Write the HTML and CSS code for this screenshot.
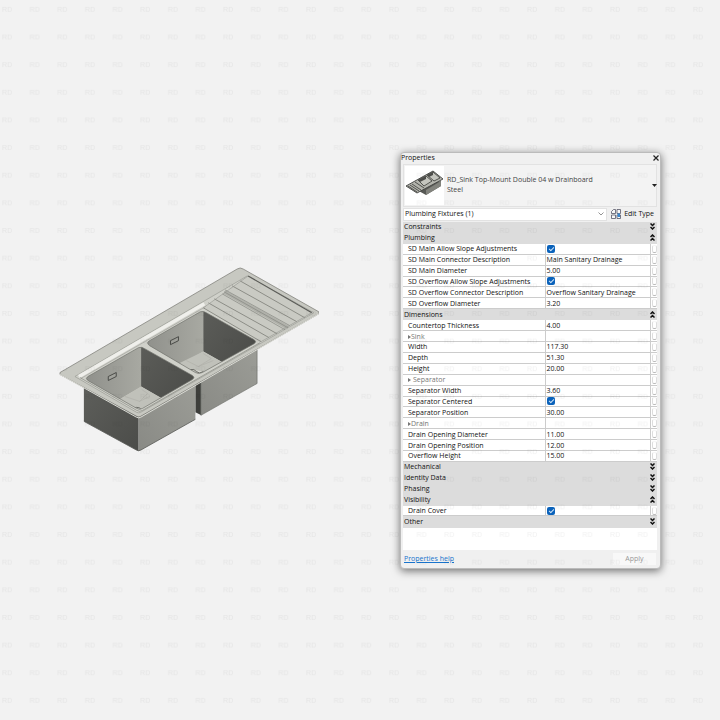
FILE: index.html
```
<!DOCTYPE html>
<html lang="en">
<head>
<meta charset="utf-8">
<meta name="viewport" content="width=device-width, initial-scale=1">
<title>Properties</title>
<link rel="stylesheet" href="styles.css">
</head>
<body>
<svg class="defs" aria-hidden="true">
  <symbol id="more" viewBox="0 0 5 7"><path d="M.5.5L2.500 2.500 4.500.5M.5 4L2.500 6 4.500 4" fill="none" stroke="#111" stroke-width="1.500"/></symbol>
  <symbol id="less" viewBox="0 0 5 7"><path d="M.5 3L2.500 1 4.500 3M.5 6.500L2.500 4.500 4.500 6.500" fill="none" stroke="#111" stroke-width="1.500"/></symbol>
</svg>
<main class="stage">
  <svg class="sink" viewBox="58 267 262 186" role="img" aria-label="Double sink with drainboard">
    <defs>
      <linearGradient id="front" x1="0" y1="1" x2="1" y2="0"><stop stop-color="#898a85"/><stop offset="1" stop-color="#9c9d97"/></linearGradient>
      <linearGradient id="side" x1="0" y1="0" x2="1" y2="1"><stop stop-color="#5e5f5b"/><stop offset="1" stop-color="#4b4c49"/></linearGradient>
      <linearGradient id="wall" x1="0" y1="0" x2="1" y2="0"><stop stop-color="#8d8e89"/><stop offset="1" stop-color="#a8a9a2"/></linearGradient>
      <linearGradient id="dark" x1="0" y1="0" x2="1" y2="1"><stop stop-color="#5c5d59"/><stop offset="1" stop-color="#464744"/></linearGradient>
      <clipPath id="bowl1"><path d="M87 377L138 348Q141 347 144 349L192 376Q195 378 192 380L142 409Q139 411 136 409L87 381Q84 379 87 377Z"/></clipPath>
      <clipPath id="bowl2"><path d="M149 341L200 312Q203 311 206 313L254 340Q257 342 254 344L202 373Q198 375 195 373L149 346Q145 343 149 341Z"/></clipPath>
    </defs>
    <path d="M195 380L201 377V416L195 413Z" fill="#3d3e3b"/>
    <path d="M200.500 380L257 345V384L200.500 416Z" fill="url(#front)" stroke="#666762" stroke-width=".6"/>
    <path d="M83 385L138 415V452L83 422Z" fill="url(#side)"/>
    <path d="M138 415L195 380V420L138 452Z" fill="url(#front)"/>
    <path d="M83 422L136 451Q138 452 140 451L195 420" fill="none" stroke="#565753" stroke-width=".8"/>
    <path d="M59 373L237 269Q240 267 243 269L319 312V314L140 417Q138 418 136 417L59 375Z" fill="#c7c8c1" stroke="#777872" stroke-width=".7"/>
    <path d="M59 375L136 418Q138 419 140 418L319 314" fill="none" stroke="#dcddd7" stroke-width="1"/>
    <path d="M74 377L247 276L314 313L140 413Q138 414 136 413Z" fill="#d0d1ca" stroke="#92938c" stroke-width=".6"/>
    <path d="M78 377L204 304" fill="none" stroke="#efefeb" stroke-width="3.500"/>
    <path d="M80 379L205 307L260 340" fill="none" stroke="#999a94" stroke-width=".6"/>
    <path d="M79 378L136 411Q139 413 142 411L260 343" fill="none" stroke="#868780" stroke-width=".7"/>
    <g clip-path="url(#bowl1)">
      <path d="M80 345H141V387L105 408H80Z" fill="url(#wall)"/>
      <path d="M140.500 345L200 376V421L140.500 387Z" fill="url(#dark)"/>
      <path d="M140.500 387L170 404L139 421L112 404Z" fill="#c0c1ba"/>
      <path d="M141 390L147 394L139 402M149 397L139 402L124 397" fill="none" stroke="#aaaba4" stroke-width=".5"/>
      <ellipse cx="136" cy="410" rx="4" ry="2" fill="#d6d7d0" stroke="#555651" stroke-width=".8"/>
    </g>
    <path d="M87 377L138 348Q141 347 144 349L192 376Q195 378 192 380L142 409Q139 411 136 409L87 381Q84 379 87 377Z" fill="none" stroke="#6f706a" stroke-width=".7"/>
    <g clip-path="url(#bowl2)">
      <path d="M140 308H203V352L165 374H140Z" fill="url(#wall)"/>
      <path d="M203 310L262 342V385L203 352Z" fill="url(#dark)"/>
      <path d="M203 352L235 370L200 387L172 367Z" fill="#c0c1ba"/>
      <path d="M203 354L211 359L198 367M213 361L198 367L186 361" fill="none" stroke="#aaaba4" stroke-width=".5"/>
      <path d="M190 370Q194 369 196 372Q199 375 203 372" fill="#d6d7d0" stroke="#555651" stroke-width=".8"/>
    </g>
    <path d="M149 341L200 312Q203 311 206 313L254 340Q257 342 254 344L202 373Q198 375 195 373L149 346Q145 343 149 341Z" fill="none" stroke="#6f706a" stroke-width=".7"/>
    <path d="M107.500 377L115.500 373V377L107.500 381ZM170 341L178 337V341L170 345Z" fill="#a1a29c" stroke="#41423f" stroke-width=".9" stroke-linejoin="round"/>
    <path d="M204 308L248 276L313 313L260 343Z" fill="#c9cac3"/>
    <path d="M240 281L305 318M232 286L297 322M214 299L277 334M208 303L269 338M203 308L261 342" fill="none" stroke="#858680" stroke-width=".9"/>
    <path d="M224 292L288 328" fill="none" stroke="#b0b1aa" stroke-width="4"/>
    <path d="M225 290L290 326M222 294L285 330M224 292L288 328" fill="none" stroke="#858680" stroke-width=".7"/>
    <path d="M203 308L248 276" fill="none" stroke="#999a94" stroke-width=".7"/>
    <path d="M248 276L312 313" fill="none" stroke="#5a5b57" stroke-width="1.200"/>
    <path d="M312 313L261 342" fill="none" stroke="#999a94" stroke-width=".7"/>
  </svg>

  <section class="panel" aria-labelledby="title">
    <header class="titlebar">
      <h1 id="title">Properties</h1>
      <button class="close" aria-label="Close"><svg viewBox="0 0 6 6"><path d="M.5.5l5 5m0-5l-5 5" stroke="#222" stroke-width="1.200"/></svg></button>
    </header>
    <div class="type">
      <div class="thumb">
        <svg viewBox="0 0 39 39" aria-hidden="true">
          <path d="M12 20V24L21 29L36 20V15Z" fill="#585955"/>
          <path d="M21 24V29L36 20V15Z" fill="#82837d"/>
          <path d="M1 20L28 5L38 13L12 27Z" fill="#b3b4ad" stroke="#41423f" stroke-width=".9"/>
          <path d="M13 14L21 10L27 15L19 20Z" fill="#c4c5be" stroke="#373835" stroke-width=".8"/>
          <path d="M22 9L28 6L35 12L29 15Z" fill="#c4c5be" stroke="#373835" stroke-width=".8"/>
          <path d="M13 14L21 10V13L15 16ZM22 9L28 6V9L24 11Z" fill="#4c4d4a"/>
          <path d="M3 20L12 26M5 19L14 25M7 18L16 24M10 16L19 22" stroke="#454643" stroke-width=".9"/>
        </svg>
      </div>
      <p class="type-name">RD_Sink Top-Mount Double 04 w Drainboard<br>Steel</p>
      <button class="type-open" aria-label="Choose type"><svg viewBox="0 0 5 3"><path d="M0 0h5L2.500 3z" fill="#222"/></svg></button>
    </div>
    <div class="filter">
      <div class="select-wrap">
        <select aria-label="Category"><option>Plumbing Fixtures (1)</option></select>
        <svg viewBox="0 0 6 4" aria-hidden="true"><path d="M.5.5L3 3 5.500.5" fill="none" stroke="#777" stroke-width=".8"/></svg>
      </div>
      <button class="edit">
        <svg viewBox="0 0 11 11" aria-hidden="true"><path d="M.5 4.500V2.500L2.500.5H4.500V4.500ZM6 .5H9.500V4.500H6ZM.5 6H4.500V9.500H.5ZM6 6H9.500V9.500H6Z" fill="#f8f8f8" stroke="#556" stroke-width=".8"/><path d="M6.500 4.500H9V8H6.500Z" fill="#3c86cc"/></svg>
        <span>Edit Type</span>
      </button>
    </div>
    <div class="list">
      <table>
        <colgroup><col class="c-name"><col><col class="c-tool"></colgroup>
        <tbody>
          <tr class="group"><th colspan="2">Constraints</th><td><svg><use href="#more"/></svg></td></tr>
          <tr class="group"><th colspan="2">Plumbing</th><td><svg><use href="#less"/></svg></td></tr>
          <tr><th><label for="a">SD Main Allow Slope Adjustments</label></th><td><input id="a" type="checkbox" checked></td><td><i></i></td></tr>
          <tr><th>SD Main Connector Description</th><td>Main Sanitary Drainage</td><td><i></i></td></tr>
          <tr><th>SD Main Diameter</th><td>5.00</td><td><i></i></td></tr>
          <tr><th><label for="b">SD Overflow Allow Slope Adjustments</label></th><td><input id="b" type="checkbox" checked></td><td><i></i></td></tr>
          <tr><th>SD Overflow Connector Description</th><td>Overflow Sanitary Drainage</td><td><i></i></td></tr>
          <tr><th>SD Overflow Diameter</th><td>3.20</td><td><i></i></td></tr>
          <tr class="group"><th colspan="2">Dimensions</th><td><svg><use href="#less"/></svg></td></tr>
          <tr><th>Countertop Thickness</th><td>4.00</td><td><i></i></td></tr>
          <tr class="sub"><th><b></b>Sink</th><td></td><td><i></i></td></tr>
          <tr><th>Width</th><td>117.30</td><td><i></i></td></tr>
          <tr><th>Depth</th><td>51.30</td><td><i></i></td></tr>
          <tr><th>Height</th><td>20.00</td><td><i></i></td></tr>
          <tr class="sub spaced"><th><b></b>Separator</th><td></td><td><i></i></td></tr>
          <tr><th>Separator Width</th><td>3.60</td><td><i></i></td></tr>
          <tr><th><label for="c">Separator Centered</label></th><td><input id="c" type="checkbox" checked></td><td><i></i></td></tr>
          <tr><th>Separator Position</th><td>30.00</td><td><i></i></td></tr>
          <tr class="sub"><th><b></b>Drain</th><td></td><td><i></i></td></tr>
          <tr><th>Drain Opening Diameter</th><td>11.00</td><td><i></i></td></tr>
          <tr><th>Drain Opening Position</th><td>12.00</td><td><i></i></td></tr>
          <tr><th>Overflow Height</th><td>15.00</td><td><i></i></td></tr>
          <tr class="group"><th colspan="2">Mechanical</th><td><svg><use href="#more"/></svg></td></tr>
          <tr class="group"><th colspan="2">Identity Data</th><td><svg><use href="#more"/></svg></td></tr>
          <tr class="group"><th colspan="2">Phasing</th><td><svg><use href="#more"/></svg></td></tr>
          <tr class="group"><th colspan="2">Visibility</th><td><svg><use href="#less"/></svg></td></tr>
          <tr><th><label for="d">Drain Cover</label></th><td><input id="d" type="checkbox" checked></td><td><i></i></td></tr>
          <tr class="group"><th colspan="2">Other</th><td><svg><use href="#more"/></svg></td></tr>
        </tbody>
      </table>
    </div>
    <footer class="foot">
      <a href="#help">Properties help</a>
      <button class="apply" disabled>Apply</button>
    </footer>
  </section>
</main>
<svg class="watermark" viewBox="0 0 720 720" preserveAspectRatio="xMinYMin slice" aria-hidden="true">
  <defs><pattern id="rd" width="27.640" height="27.640" patternUnits="userSpaceOnUse"><text x="2" y="12">RD</text></pattern></defs>
  <rect width="720" height="720" fill="url(#rd)"/>
</svg>
</body>
</html>
```
FILE: styles.css
```
* { box-sizing: border-box; }
body {
  margin: 0;
  background: #f2f2f2;
  color: #111;
  font: 7px/10px "Open Sans", "Noto Sans", sans-serif;
}
button, select, input { font: inherit; color: inherit; margin: 0; }
button { border: 0; background: none; padding: 0; }
svg { display: block; }
.defs { position: absolute; width: 0; height: 0; }

.stage {
  display: grid;
  grid-template-columns: 378fr 22fr 261fr 59fr;
  align-items: center;
  min-height: 100vh;
}
.sink { width: 69%; justify-self: center; }

.panel {
  grid-column: 3;
  padding: 0 3px 0 2px;
  background: #f0f0f0;
  border: 1px solid #bbb;
  border-radius: 4px;
  box-shadow: 0 2px 9px rgba(0, 0, 0, .55);
}
.titlebar {
  display: flex;
  justify-content: space-between;
  align-items: center;
  height: 11px;
}
.titlebar h1 { margin: 0 0 0 -2px; font-size: 7px; font-weight: 400; }
.close { margin-right: -2px; }
.close svg { width: 6px; height: 6px; }

.type {
  display: flex;
  align-items: center;
  gap: 3px;
  height: 43px;
  padding: 0 0 0 1px;
  border: 1px solid #e2e2e2;
  background: #f3f3f3;
}
.thumb { width: 39px; height: 39px; background: #fff; }
.type-name { flex: 1; margin: 0; color: #444; white-space: nowrap; }
.type-open { margin-right: -1px; }
.type-open svg { width: 5px; height: 3px; }

.filter {
  display: flex;
  align-items: center;
  gap: 4px;
  height: 15px;
}
.select-wrap {
  display: grid;
  flex: 1;
  align-items: center;
  background: #fff;
  border: 1px solid #e2e2e2;
}
.select-wrap > * { grid-area: 1 / 1; }
.select-wrap select {
  appearance: none;
  width: 100%;
  height: 11px;
  padding: 0 1px;
  border: 0;
  background: transparent;
}
.select-wrap svg { justify-self: end; width: 6px; height: 4px; margin-right: 2px; pointer-events: none; }
.edit { display: flex; align-items: center; gap: 2px; padding-right: 3px; white-space: nowrap; }
.edit svg { width: 11px; height: 11px; }

.list { background: #fff; padding-bottom: 22px; }
table {
  width: 100%;
  height: 306px;
  table-layout: fixed;
  border-collapse: collapse;
}
.c-name { width: 142px; }
.c-tool { width: 7px; }
tr { height: 10px; }
th, td {
  padding: 0;
  border-bottom: 1px solid #ccc;
  font-weight: 400;
  line-height: 9px;
  text-align: left;
  white-space: nowrap;
  vertical-align: middle;
}
th { padding-left: 5px; }
td { border-left: 1px solid #ccc; padding-left: 1px; }
td:last-child { padding: 0; }
td i { display: block; height: 8px; margin-left: 1px; border: 1px solid #ddd; border-top-color: #f5f5f5; border-bottom-color: #bbb; border-radius: 2px; }
.group th, .group td { background: #dcdcdc; border-color: #dcdcdc; }
.group th { padding-left: 1px; }
.group td { border-left: 0; }
.group svg { width: 5px; height: 7px; }
.sub th { color: #777; }
.sub b {
  display: inline-block;
  border: solid transparent;
  border-width: 2px 0 2px 3px;
  border-left-color: #777;
}
.spaced b { margin-right: 2px; }
input[type="checkbox"] {
  appearance: none;
  display: block;
  width: 8px;
  height: 8px;
  border-radius: 2px;
  background: #0a62bb;
}
input[type="checkbox"]::before {
  content: "";
  display: block;
  width: 4px;
  height: 2px;
  margin: 2px;
  border: solid #cfe3f7;
  border-width: 0 0 1px 1px;
  transform: rotate(-45deg);
}

.foot {
  display: flex;
  justify-content: space-between;
  align-items: center;
  height: 18px;
  padding: 0 1px;
}
.foot a { color: #1874cd; }
.apply { width: 43px; height: 12px; background: #f8f8f8; color: #999; }

.watermark {
  position: absolute;
  inset: 0;
  width: 100%;
  height: 100%;
  pointer-events: none;
}
.watermark text {
  font: 7px "Liberation Sans", sans-serif;
  fill: #000;
  fill-opacity: .06;
}
```
